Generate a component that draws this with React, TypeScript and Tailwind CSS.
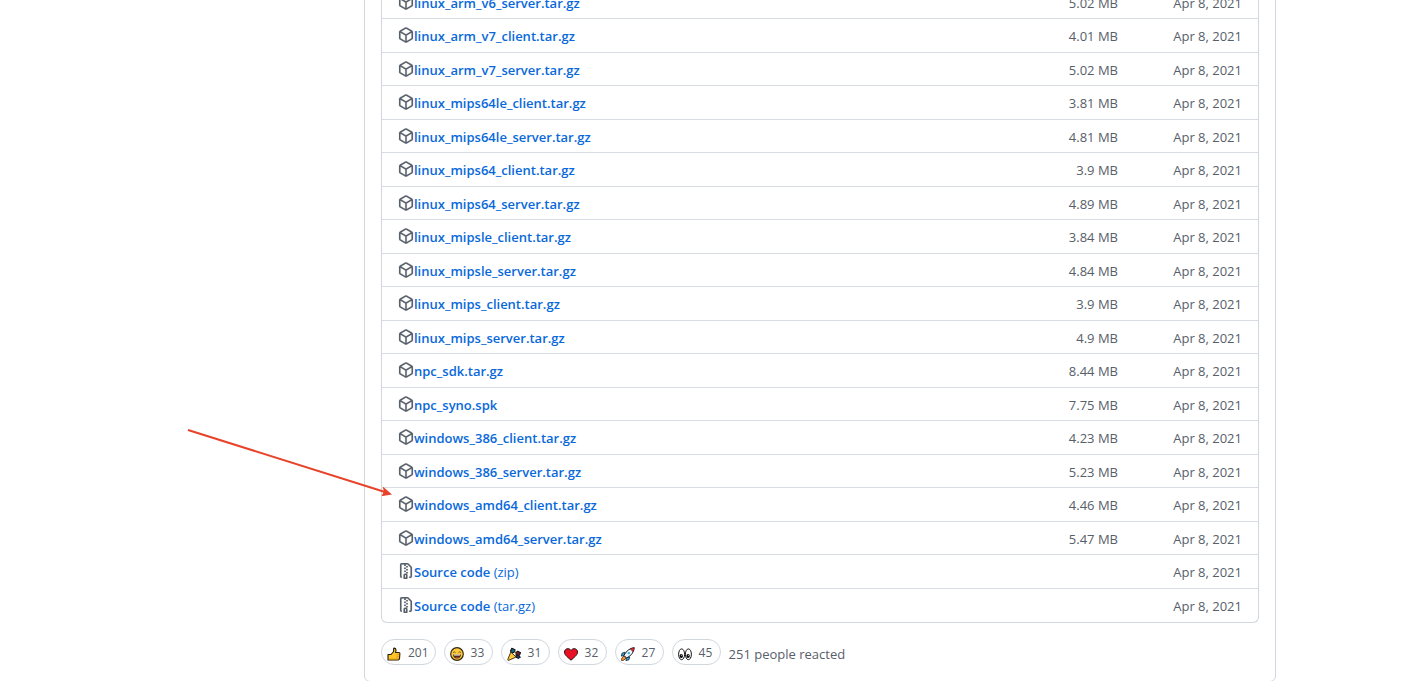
import type { ReactNode } from 'react';

type Asset = { name: string; size?: string; archive?: string };

const assets: Asset[] = [
  { name: 'linux_arm_v6_server.tar.gz', size: '5.02 MB' },
  { name: 'linux_arm_v7_client.tar.gz', size: '4.01 MB' },
  { name: 'linux_arm_v7_server.tar.gz', size: '5.02 MB' },
  { name: 'linux_mips64le_client.tar.gz', size: '3.81 MB' },
  { name: 'linux_mips64le_server.tar.gz', size: '4.81 MB' },
  { name: 'linux_mips64_client.tar.gz', size: '3.9 MB' },
  { name: 'linux_mips64_server.tar.gz', size: '4.89 MB' },
  { name: 'linux_mipsle_client.tar.gz', size: '3.84 MB' },
  { name: 'linux_mipsle_server.tar.gz', size: '4.84 MB' },
  { name: 'linux_mips_client.tar.gz', size: '3.9 MB' },
  { name: 'linux_mips_server.tar.gz', size: '4.9 MB' },
  { name: 'npc_sdk.tar.gz', size: '8.44 MB' },
  { name: 'npc_syno.spk', size: '7.75 MB' },
  { name: 'windows_386_client.tar.gz', size: '4.23 MB' },
  { name: 'windows_386_server.tar.gz', size: '5.23 MB' },
  { name: 'windows_amd64_client.tar.gz', size: '4.46 MB' },
  { name: 'windows_amd64_server.tar.gz', size: '5.47 MB' },
  { name: 'Source code', archive: '(zip)' },
  { name: 'Source code', archive: '(tar.gz)' },
];

function PackageIcon() {
  return (
    <svg viewBox="0 0 16 16" className="mb-0.5 size-4 shrink-0 fill-[#57606a] stroke-[#57606a]" strokeWidth=".15" aria-hidden="true">
      <path d="m8.878.392 5.25 3.045c.54.314.872.89.872 1.514v6.098a1.75 1.75 0 0 1-.872 1.514l-5.25 3.045a1.75 1.75 0 0 1-1.756 0l-5.25-3.045A1.75 1.75 0 0 1 1 11.049V4.951c0-.624.332-1.201.872-1.514L7.122.392a1.75 1.75 0 0 1 1.756 0ZM7.875 1.69l-4.63 2.685L8 7.133l4.755-2.758-4.63-2.685a.248.248 0 0 0-.25 0ZM2.5 5.677v5.372c0 .09.047.171.125.216l4.625 2.683V8.432Zm6.25 8.271 4.625-2.683a.25.25 0 0 0 .125-.216V5.677L8.75 8.432Z" />
    </svg>
  );
}

function ZipIcon() {
  return (
    <svg viewBox="0 0 16 16" className="mb-0.5 size-4 shrink-0 fill-[#57606a] stroke-[#57606a]" strokeWidth=".15" aria-hidden="true">
      <path d="M3.5 1.75v11.5c0 .09.048.173.126.217a.75.75 0 0 1-.752 1.298A1.748 1.748 0 0 1 2 13.25V1.75C2 .784 2.784 0 3.75 0h5.586c.464 0 .909.185 1.237.513l2.914 2.914c.329.328.513.773.513 1.237v8.586A1.75 1.75 0 0 1 12.25 15h-.5a.75.75 0 0 1 0-1.5h.5a.25.25 0 0 0 .25-.25V4.664a.25.25 0 0 0-.073-.177L9.513 1.573a.25.25 0 0 0-.177-.073H7.25a.75.75 0 0 1 0 1.5h-.5a.75.75 0 0 1 0-1.5h-3a.25.25 0 0 0-.25.25Zm3.75 8.75h.5c.966 0 1.75.784 1.75 1.75v3a.75.75 0 0 1-.75.75h-2.5a.75.75 0 0 1-.75-.75v-3c0-.966.784-1.75 1.75-1.75ZM6 5.25a.75.75 0 0 1 .75-.75h.5a.75.75 0 0 1 0 1.5h-.5A.75.75 0 0 1 6 5.25Zm.75 2.25h.5a.75.75 0 0 1 0 1.5h-.5a.75.75 0 0 1 0-1.5ZM8 6.75A.75.75 0 0 1 8.75 6h.5a.75.75 0 0 1 0 1.5h-.5A.75.75 0 0 1 8 6.75ZM8.75 3h.5a.75.75 0 0 1 0 1.5h-.5a.75.75 0 0 1 0-1.5ZM8 9.75A.75.75 0 0 1 8.75 9h.5a.75.75 0 0 1 0 1.5h-.5A.75.75 0 0 1 8 9.75Zm-1 2.5v2.25h1v-2.25a.25.25 0 0 0-.25-.25h-.5a.25.25 0 0 0-.25.25Z" />
    </svg>
  );
}

function Glyph({ children }: { children: ReactNode }) {
  return (
    <svg viewBox="0 0 14 14" className="mt-0.5 size-3.5 shrink-0" aria-hidden="true">
      {children}
    </svg>
  );
}

const reactions: { label: string; count: number; icon: ReactNode }[] = [
  {
    label: 'Thumbs up',
    count: 201,
    icon: (
      <Glyph>
        <path d="M1 7.500h3l2.600-3V2q0-.9.9-.9 1.500.2 1.500 2.200L8.600 5.500h3.300q1 .1 1 1l-.4 5.200q-.2 1.300-1.500 1.300H1Z" fill="#ffc425" stroke="#221b0b" strokeWidth="1.100" strokeLinejoin="round" />
        <path d="M9.500 7.500h2.600M9.500 9.300h2.500M9 11.100h2.800" stroke="#c98514" strokeWidth=".5" />
        <path d="M1.600 12.100h9.400" stroke="#e39a16" strokeWidth=".8" />
      </Glyph>
    ),
  },
  {
    label: 'Laugh',
    count: 33,
    icon: (
      <Glyph>
        <circle cx="7" cy="7" r="6.300" fill="#ffc83d" stroke="#33290f" strokeWidth="1.200" />
        <path d="M3 5.600q1.300-1.500 2.600 0M8.400 5.600q1.300-1.500 2.600 0" fill="none" stroke="#6b4d18" strokeWidth=".9" />
        <path d="M3 7.500h8q-.3 4-4 4t-4-4Z" fill="#4a2c17" />
        <path d="M3.700 7.600h6.600l-.4 .9H4.100Z" fill="#fff" />
        <path d="M5 10.700q2-1.200 4 0-2 1.200-4 0Z" fill="#b5472f" />
      </Glyph>
    ),
  },
  {
    label: 'Hooray',
    count: 31,
    icon: (
      <Glyph>
        <path d="m4.800 1.200 3.200 1.600-.4 2.600-2.900.4L3.500 4Z" fill="#136579" stroke="#0d1218" strokeWidth="1.100" strokeLinejoin="round" />
        <path d="m8.800 5.700 2-1.600 2.700 1.700-1.100 2.400-3.200-.1Z" fill="#7c1f2a" stroke="#121318" strokeWidth="1.100" strokeLinejoin="round" />
        <path d="m9 8.400 2-.1 2.500 1.900-2.200 1.200-2.200-1Z" fill="#1b3e68" stroke="#121318" strokeWidth="1" strokeLinejoin="round" />
        <path d="m3.800 5 5.300 5-7.300 3.300q-1.200.3-1-.9Z" fill="#ffc83d" stroke="#31240e" strokeWidth=".9" strokeLinejoin="round" />
        <path d="m7.200 5.200 1.400 1.400" stroke="#d69519" strokeWidth="1" />
      </Glyph>
    ),
  },
  {
    label: 'Heart',
    count: 32,
    icon: (
      <Glyph>
        <path d="M7 13.200C4.300 10.700.5 8.300.5 5.100c0-3.700 4.600-4.600 6.500-1.700 1.900-2.900 6.500-2 6.500 1.700 0 3.200-3.800 5.600-6.500 8.100Z" fill="#e81224" stroke="#2b0d10" strokeWidth="1" />
      </Glyph>
    ),
  },
  {
    label: 'Rocket',
    count: 27,
    icon: (
      <Glyph>
        <path d="m4.200 5.200-3 .9-.9 3 2.700-.4ZM8.800 9.800l-.9 3-3 .8.500-2.700Z" fill="#30a5dc" stroke="#173447" strokeWidth=".9" />
        <path d="M3 9 .8 11.300l-.3 2.200 2.200-.2L5 11Z" fill="#f7942a" stroke="#5b2710" strokeWidth=".8" />
        <path d="M3 8.400Q6.500 1.500 13.200.7q-.5 6.800-7.600 10.300Z" fill="#e9f4fa" stroke="#1b232a" strokeWidth="1" />
        <path d="M9.300 1.900Q11 .9 13.200.7q-.1 2.300-1.200 4Z" fill="#e5283b" stroke="#59151d" strokeWidth=".6" />
        <circle cx="7.800" cy="6.100" r="1.200" fill="#30a5dc" />
      </Glyph>
    ),
  },
  {
    label: 'Eyes',
    count: 45,
    icon: (
      <Glyph>
        <ellipse cx="3.600" cy="7.300" rx="3" ry="5.400" fill="#fff" stroke="#111" strokeWidth="1" />
        <ellipse cx="10.400" cy="7.300" rx="3" ry="5.400" fill="#fff" stroke="#111" strokeWidth="1" />
        <ellipse cx="3.300" cy="9" rx="1.700" ry="2.100" fill="#0a0a0a" />
        <ellipse cx="10.100" cy="9" rx="1.700" ry="2.100" fill="#0a0a0a" />
        <circle cx="3.600" cy="8.200" r=".5" fill="#fff" />
        <circle cx="10.400" cy="8.200" r=".5" fill="#fff" />
      </Glyph>
    ),
  },
];

function AssetRow({ name, size, archive }: Asset) {
  return (
    <li className="flex items-center border-t border-[#d8dee4] px-4 odd:h-[33px] odd:pt-px even:h-[34px]">
      {archive ? <ZipIcon /> : <PackageIcon />}
      <a href="#" className="font-semibold text-[#0969da]">
        {name}
        {archive && <span className="font-normal"> {archive}</span>}
      </a>
      <span className="ml-auto">{size}</span>
      <time dateTime="2021-04-08" className="w-[124px] text-right">
        Apr 8, 2021
      </time>
    </li>
  );
}

export default function App() {
  return (
    <main className="relative h-screen overflow-hidden bg-white font-['Open_Sans','Noto_Sans',sans-serif] text-[13px] leading-5 text-[#57606a]">
      <section className="-mt-4 mr-[135px] ml-[364px] rounded-md border border-[#d0d7de] px-4 pb-4">
        <ul className="rounded-b-md border border-t-0 border-[#d0d7de] pb-px">
          {assets.map((asset) => (
            <AssetRow key={asset.name + (asset.archive ?? '')} {...asset} />
          ))}
        </ul>
        <div className="mt-4 flex items-start gap-2">
          {reactions.map(({ label, count, icon }) => (
            <button
              key={label}
              type="button"
              aria-label={`${label} ${count}`}
              className="flex h-[26px] min-w-[49px] items-center gap-[7px] rounded-full border border-[#d0d7de] pt-0.5 pr-1.5 pl-[5px] text-xs"
            >
              {icon}
              <span>{count}</span>
            </button>
          ))}
          <span className="pt-[5px]">251 people reacted</span>
        </div>
      </section>
      <svg viewBox="0 0 206 68" className="absolute top-[428px] left-[187px] h-[68px] w-[206px]" aria-hidden="true">
        <path d="M1 2 198 64" stroke="#e8432a" strokeWidth="2" />
        <path d="m205 66.500-10.500 1.700 2.300-4.500-1-5.200Z" fill="#e8432a" />
      </svg>
    </main>
  );
}
